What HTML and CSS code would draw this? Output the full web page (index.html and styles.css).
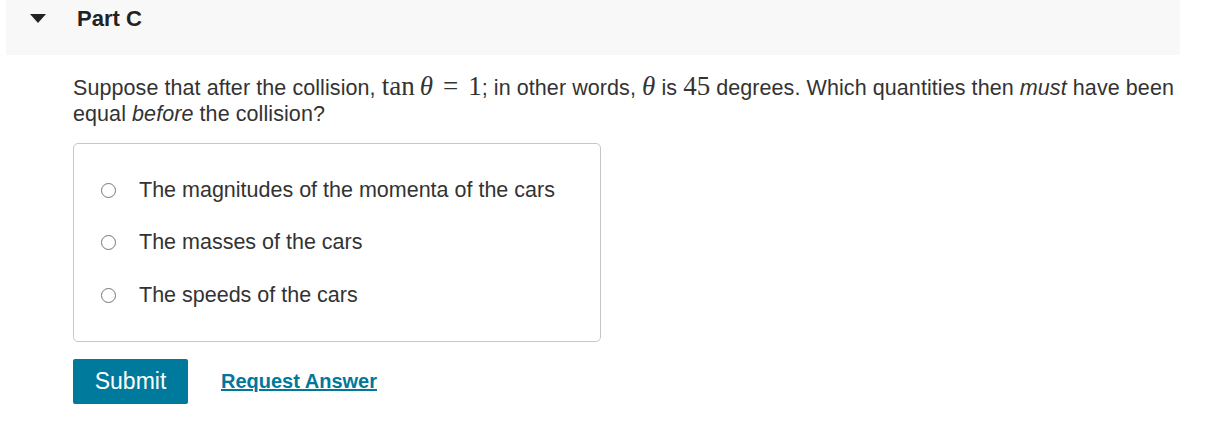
FILE: index.html
```html
<!DOCTYPE html>
<html lang="en">
<head>
  <meta charset="UTF-8" />
  <title>Part C</title>
  <link rel="stylesheet" href="styles.css">
</head>
<body>

  <div class="part">
    <div class="part-head">
      <span class="caret"></span>
      <h2 class="part-title">Part C</h2>
    </div>

    <div class="part-body">
      <p class="question">Suppose that after the collision, <span class="math">tan<span class="thin"></span><i>θ</i><span class="rel">=</span>1</span>; in other words, <span class="math"><i>θ</i></span> is <span class="math">45</span> degrees. Which quantities then <em>must</em> have been equal <em>before</em> the collision?</p>

      <div class="choices">
        <label class="choice"><input type="radio" name="c"> <span>The magnitudes of the momenta of the cars</span></label>
        <label class="choice"><input type="radio" name="c"> <span>The masses of the cars</span></label>
        <label class="choice"><input type="radio" name="c"> <span>The speeds of the cars</span></label>
      </div>

      <div class="actions">
        <button class="submit">Submit</button>
        <a class="request" href="#">Request Answer</a>
      </div>
    </div>
  </div>

</body>
</html>
```

FILE: styles.css
```css
body {
  margin: 0;
  font-family: "Liberation Sans", Arial, sans-serif;
  color: #333;
  background: #fff;
}
.part {
  width: 1174px;
  margin-left: 6px;
}
.part-head {
  display: flex;
  align-items: center;
  height: 55px;
  background: #f8f8f8;
  padding-bottom: 18px;
  box-sizing: border-box;
}
.caret {
  width: 0;
  height: 0;
  border-left: 8px solid transparent;
  border-right: 8px solid transparent;
  border-top: 9px solid #222;
  margin-left: 24px;
  margin-right: 31px;
}
.part-title {
  margin: 0;
  font-size: 22px;
  font-weight: bold;
  color: #222;
}
.part-body {
  padding-left: 67px;
}
.question {
  margin: 20px 0 0;
  font-size: 21.5px;
  line-height: 26px;
  letter-spacing: 0.08px;
  width: 1112px;
}
.math {
  font-family: "Liberation Serif", serif;
  font-size: 27px;
  line-height: 20px;
  letter-spacing: 0;
}
.thin {
  display: inline-block;
  width: 5px;
}
.rel {
  margin: 0 10px;
}
.choices {
  margin-top: 16px;
  width: 528px;
  height: 199px;
  border: 1px solid #c6c6c6;
  border-radius: 5px;
  padding-top: 33px;
  box-sizing: border-box;
}
.choice {
  display: flex;
  align-items: center;
  height: 26px;
  margin-bottom: 26.5px;
  font-size: 21.5px;
}
.choice input {
  width: 15px;
  height: 15px;
  margin: 0 23px 0 27px;
}
.actions {
  display: flex;
  align-items: center;
  margin-top: 17px;
  gap: 33px;
}
.submit {
  width: 115px;
  height: 45px;
  background: #007a9c;
  color: #fff;
  border: none;
  border-radius: 2px;
  font-family: "Liberation Sans", Arial, sans-serif;
  font-size: 23px;
}
.request {
  color: #00789a;
  font-weight: bold;
  font-size: 20px;
  text-decoration: underline;
}
```
